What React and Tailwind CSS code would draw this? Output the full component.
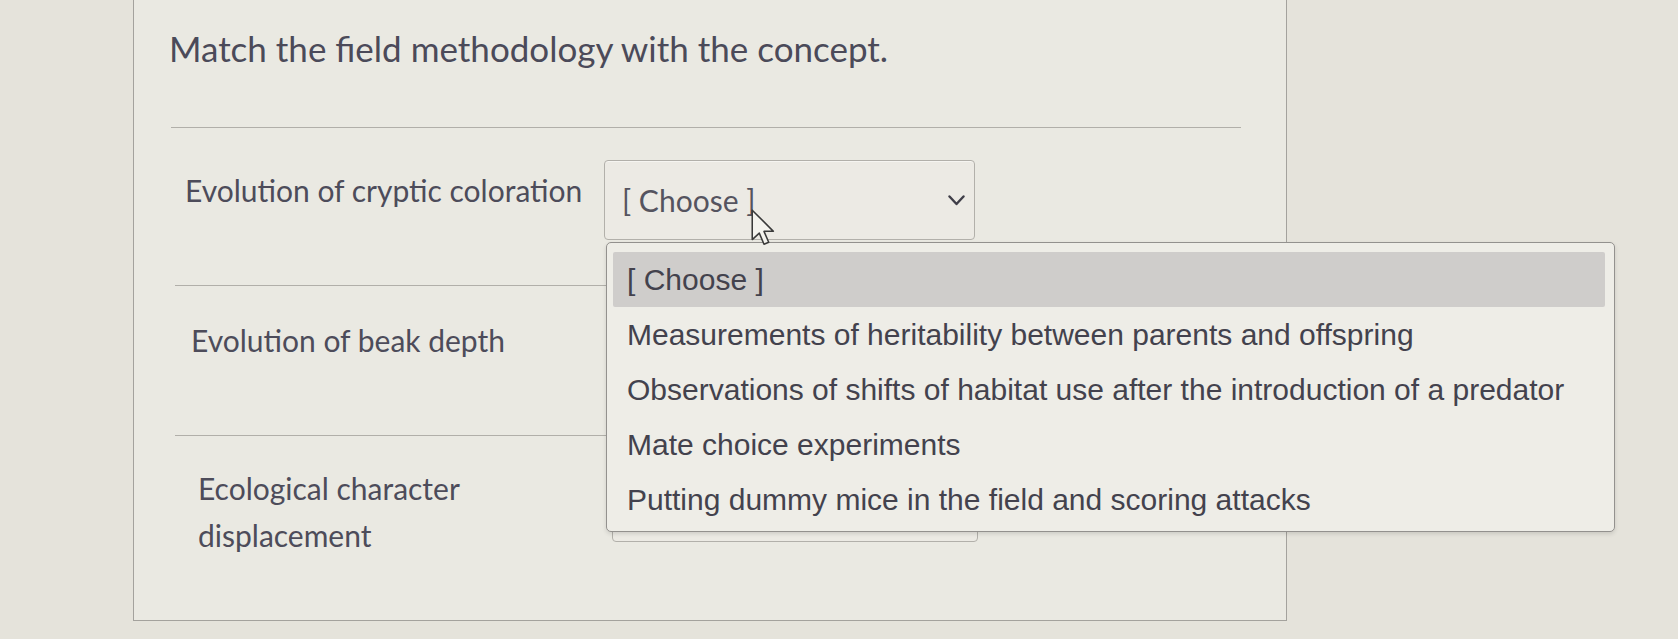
import React from "react";

const options = [
  "[ Choose ]",
  "Measurements of heritability between parents and offspring",
  "Observations of shifts of habitat use after the introduction of a predator",
  "Mate choice experiments",
  "Putting dummy mice in the field and scoring attacks",
];

function Chevron() {
  return (
    <svg width="17" height="11" viewBox="0 0 17 11" className="shrink-0">
      <polyline points="1.5,1.5 8.5,9 15.5,1.5" fill="none" stroke="#3f3e48" strokeWidth="2.4" strokeLinecap="round" strokeLinejoin="round" />
    </svg>
  );
}

function SelectBox({ w, covered }) {
  return (
    <div
      className={`${w} h-[80px] shrink-0 flex items-center justify-between pl-[17px] pr-[9px] border border-[#b2b0aa] rounded-[4px] bg-[#eceae4] shadow-[inset_0_1px_0_#f6f5f1]`}
    >
      {covered ? <span /> : <span className="text-[30px] text-[#55545f]">[ Choose ]</span>}
      {covered ? null : <Chevron />}
    </div>
  );
}

function Cursor() {
  return (
    <svg width="26" height="40" viewBox="0 0 22 34" className="absolute left-[751px] top-[209px]">
      <path d="M1 1 L1 26 L7 20.5 L11 30 L15 28.3 L11 19 L19 19 Z" fill="#f4f3ee" stroke="#3a3a3a" strokeWidth="1.3" strokeLinejoin="round" />
    </svg>
  );
}

export default function App() {
  return (
    <div className="relative w-[1678px] h-[639px] overflow-hidden bg-[#e5e3db] font-['Lato','Liberation_Sans',sans-serif] text-[#4d4c5a]">
      <div className="ml-[133px] w-[1154px] h-[621px] border-x border-b border-[#a4a29d] bg-[#eae9e2]">
        <h1 className="pt-[27px] pl-[35px] text-[35px] leading-[42px] font-normal text-[#4b4a59]">
          Match the field methodology with the concept.
        </h1>
        <div className="mt-[58px] ml-[37px] w-[1070px] h-px bg-[#b1afa9]" />

        <div className="ml-[41px] w-[1066px] flex items-start pt-[32px] pb-[45px] border-b border-[#b1afa9]">
          <div className="w-[429px] shrink-0 pl-[10px] pt-[7px]">
            <div className="w-[405px] text-[30px] leading-[47px]">Evolution of cryptic coloration</div>
          </div>
          <SelectBox w="w-[371px]" />
        </div>

        <div className="ml-[41px] w-[1066px] flex items-start pt-[30px] pb-[39px] border-b border-[#b1afa9]">
          <div className="w-[433px] shrink-0 pl-[16px] pt-[1px]">
            <div className="w-[405px] text-[30px] leading-[47px]">Evolution of beak depth</div>
          </div>
          <SelectBox w="w-[368px]" covered />
        </div>

        <div className="ml-[41px] w-[1066px] flex items-start pt-[26px]">
          <div className="w-[437px] shrink-0 pl-[23px] pt-[3px]">
            <div className="w-[405px] text-[30px] leading-[47px]">Ecological character displacement</div>
          </div>
          <SelectBox w="w-[366px]" covered />
        </div>
      </div>

      <div className="absolute left-[606px] top-[242px] w-[1009px] h-[290px] border border-[#93918e] rounded-[5px] bg-[#eeede7] shadow-[0_2px_4px_rgba(0,0,0,0.12)] pt-[9px] pl-[6px] pr-[9px] font-['Liberation_Sans','Arial',sans-serif] text-[30px]">
        {options.map((o, i) => (
          <div
            key={i}
            className={`h-[55px] leading-[55px] pl-[14px] whitespace-nowrap text-[#43424d] ${i === 0 ? "bg-[#cfcdcb] rounded-[2px]" : ""}`}
          >
            {o}
          </div>
        ))}
      </div>

      <Cursor />
    </div>
  );
}
